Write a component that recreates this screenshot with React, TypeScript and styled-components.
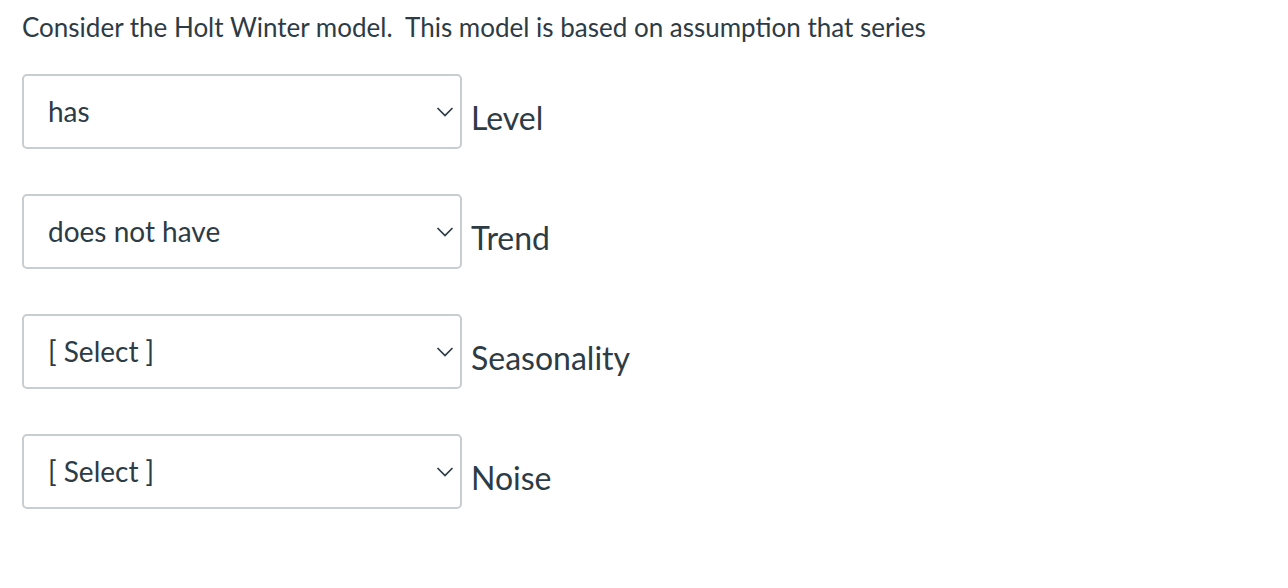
import styled, { createGlobalStyle } from 'styled-components';

const GlobalStyle = createGlobalStyle`
  body {
    margin: 0;
    background: #fff;
    font-family: Lato, "Noto Sans", sans-serif;
    color: #2d3b45;
  }
`;

const Page = styled.div`
  padding: 10px 22px;
`;

const Question = styled.p`
  margin: 0 0 30px;
  font-size: 26px;
  line-height: 34px;
`;

const Row = styled.div`
  display: flex;
  align-items: center;
  margin-bottom: 45px;
`;

const SelectBox = styled.div`
  box-sizing: border-box;
  width: 440px;
  height: 75px;
  border: 2px solid #c7cdd1;
  border-radius: 5px;
  display: flex;
  align-items: center;
  justify-content: space-between;
  padding: 0 6px 2px 24px;
  font-size: 28px;
`;

const Chevron = styled.svg`
  width: 18px;
  height: 18px;
  margin-top: 2px;
  color: #2d3b45;
`;

const Label = styled.span`
  margin-left: 9px;
  margin-top: 12px;
  font-size: 32px;
`;

const rows = [
  { value: 'has', label: 'Level' },
  { value: 'does not have', label: 'Trend' },
  { value: '[ Select ]', label: 'Seasonality' },
  { value: '[ Select ]', label: 'Noise' },
];

export default function App() {
  return (
    <Page>
      <GlobalStyle />
      <Question>Consider the Holt Winter model.&nbsp; This model is based on assumption that series</Question>
      {rows.map((r, i) => (
        <Row key={i}>
          <SelectBox>
            <span>{r.value}</span>
            <Chevron viewBox="0 0 18 18" fill="none" stroke="currentColor" strokeWidth="1.7">
              <path d="M1.5 5 L9 12.5 L16.5 5" />
            </Chevron>
          </SelectBox>
          <Label>{r.label}</Label>
        </Row>
      ))}
    </Page>
  );
}
